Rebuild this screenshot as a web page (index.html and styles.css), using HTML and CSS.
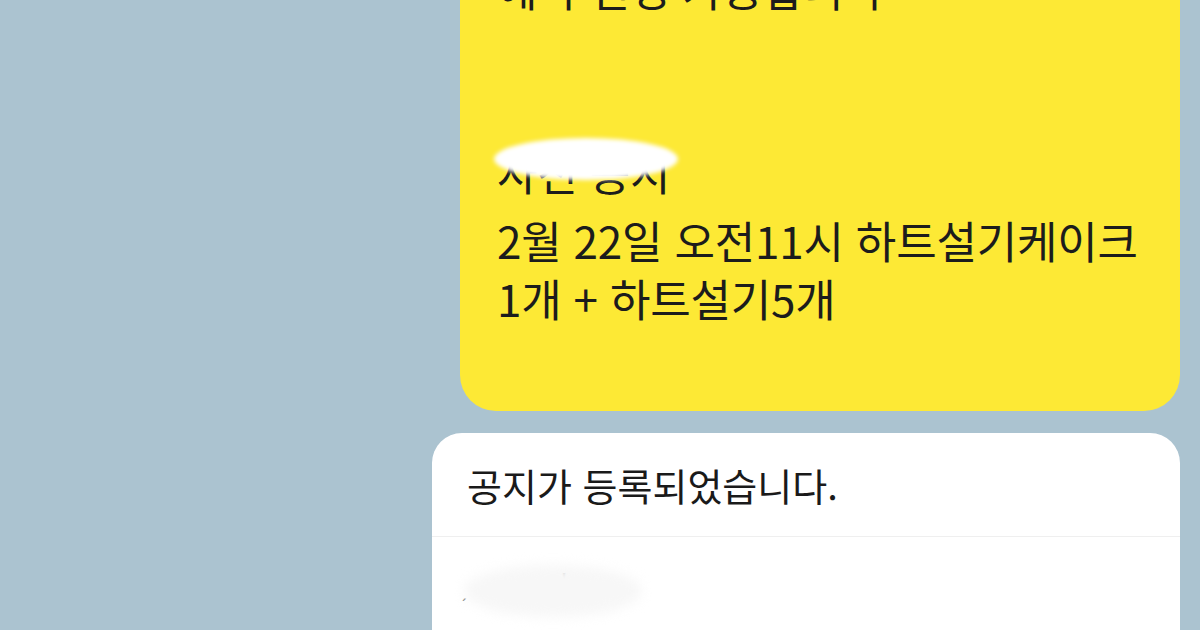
FILE: index.html
```html
<!DOCTYPE html>
<html lang="ko">
<head>
<meta charset="utf-8">
<link rel="stylesheet" href="styles.css">
</head>
<body>
<main class="chat">
  <div class="bubble">
    <p class="line top-line">예약 변경 가능합니다</p>
    <div class="masked">
      <p class="line">사전 공지</p>
      <span class="blob"></span>
    </div>
    <p class="line">2월 22일 오전11시 하트설기케이크</p>
    <p class="line">1개 + 하트설기5개</p>
  </div>
  <section class="notice">
    <h2 class="notice-title">공지가 등록되었습니다.</h2>
    <div class="notice-body">
      <div class="masked small">
        <p class="body-line"><span class="tick">ˏ</span><span class="dash">ㅡ'</span></p>
        <span class="blob faint"></span>
      </div>
    </div>
  </section>
</main>
</body>
</html>
```

FILE: styles.css
```css
* { box-sizing: border-box; }
html, body {
  margin: 0;
  padding: 0;
  width: 1200px;
  height: 630px;
  overflow: hidden;
  background: #abc3d0;
  font-family: "Noto Sans CJK KR", "Noto Sans", sans-serif;
  color: #1c1c1c;
}
.chat {
  display: flex;
  flex-direction: column;
  align-items: flex-end;
  padding-right: 20px;
}
.bubble {
  width: 720px;
  margin-top: -44px;
  background: #fde935;
  border-radius: 36px;
  padding: 3px 37px 84px;
}
.line {
  margin: 0;
  font-size: 44px;
  line-height: 58px;
  white-space: nowrap;
  letter-spacing: -0.2px;
}
.top-line {
  margin-bottom: 126px;
}
.masked {
  position: relative;
}
.bubble .masked {
  margin-bottom: 10px;
}
.blob {
  position: absolute;
  left: -3px;
  top: -5px;
  width: 184px;
  height: 42px;
  background: #ffffff;
  border-radius: 50%;
  filter: blur(2px);
}
.notice {
  width: 748px;
  margin-top: 22px;
  background: #ffffff;
  border-radius: 30px 30px 0 0;
  height: 240px;
}
.notice-title {
  margin: 0;
  padding: 0 35px;
  height: 104px;
  display: flex;
  align-items: center;
  font-size: 38px;
  font-weight: 400;
  letter-spacing: 0;
  color: #1a1a1a;
  border-bottom: 1px solid #efefef;
}
.notice-body {
  padding: 28px 30px;
}
.body-line {
  margin: 0;
  height: 40px;
  font-size: 26px;
  line-height: 40px;
  color: #444;
  display: flex;
  gap: 70px;
}
.tick {
  font-size: 16px;
  color: #777;
  padding-top: 6px;
}
.dash { color: #333; }
.blob.faint {
  left: 2px;
  top: 0;
  width: 178px;
  height: 52px;
  background: #f7f7f7;
  filter: blur(6px);
}
```
